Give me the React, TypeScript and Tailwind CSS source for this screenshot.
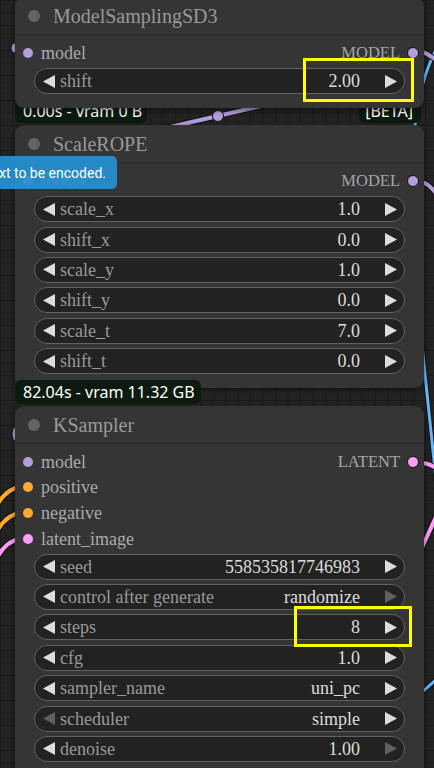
import React from "react";

type Slot = { label: string; color: string };

function Tri({ dir, dim }: { dir: "l" | "r"; dim?: boolean }) {
  return (
    <svg width="12" height="13" viewBox="0 0 12 13" className="shrink-0">
      <polygon
        points={dir === "l" ? "12,0 12,13 0,6.5" : "0,0 0,13 12,6.5"}
        fill={dim ? "#5f5f5f" : "#dddddd"}
      />
    </svg>
  );
}

function Widget({
  label,
  value,
  leftDim,
  rightDim,
}: {
  label: string;
  value: string;
  leftDim?: boolean;
  rightDim?: boolean;
}) {
  return (
    <div className="h-[30.4px] flex items-center px-[19px]">
      <div className="h-[26px] w-full rounded-full bg-[#222222] border border-[#616161] flex items-center">
        <div className="ml-[8px] flex">
          <Tri dir="l" dim={leftDim} />
        </div>
        <span className="ml-[5px] text-[#999999] leading-none whitespace-nowrap">{label}</span>
        <span className="ml-auto text-[#dddddd] leading-none whitespace-nowrap">{value}</span>
        <div className="ml-[25px] mr-[7px] flex">
          <Tri dir="r" dim={rightDim} />
        </div>
      </div>
    </div>
  );
}

function Row({ left, right, h }: { left?: Slot; right?: Slot; h: string }) {
  return (
    <div className={`${h} flex items-center`}>
      {left && (
        <>
          <div className="ml-[8px] w-[10px] h-[10px] rounded-full shrink-0" style={{ background: left.color }} />
          <span className="ml-[8px] text-[#aaaaaa] leading-none">{left.label}</span>
        </>
      )}
      {right && (
        <>
          <span className="ml-auto text-[#a5a5a5] text-[16.5px] leading-none">{right.label}</span>
          <div
            className="ml-[7px] mr-[5px] w-[12px] h-[12px] rounded-full shrink-0 border border-[#111111]"
            style={{ background: right.color }}
          />
        </>
      )}
    </div>
  );
}

function Title({ text }: { text: string }) {
  return (
    <div className="h-[38px] flex items-center border-b border-[#2a2a2a]">
      <div className="ml-[13px] w-[12px] h-[12px] rounded-full bg-[#636363]" />
      <span className="ml-[13px] text-[20px] text-[#999999] leading-none">{text}</span>
    </div>
  );
}

const MODEL = "#b39ddb";
const COND = "#ffa931";
const LAT = "#ff9cf9";

export default function App() {
  return (
    <div
      className="relative w-[434px] h-[768px] overflow-hidden bg-[#232323] bg-[linear-gradient(#1a1a1a_1px,transparent_1px),linear-gradient(90deg,#1a1a1a_1px,transparent_1px)] bg-[size:12.5px_12.5px] text-[18px]"
      style={{ fontFamily: '"Liberation Serif", "Times New Roman", serif' }}
    >
      {/* links */}
      <svg className="absolute inset-0 z-0" width="434" height="768" viewBox="0 0 434 768">
        <g fill="none" strokeLinecap="round">
          <path d="M140 134 L300 97" stroke="#111" strokeWidth="6" />
          <path d="M140 134 L300 97" stroke={MODEL} strokeWidth="4" />
          <path d="M445 35 Q420 70 414 135" stroke="#111" strokeWidth="5" />
          <path d="M445 35 Q420 70 414 135" stroke="#64b5f6" strokeWidth="3" />
          <path d="M422 345 L436 480" stroke="#111" strokeWidth="5" />
          <path d="M422 345 L436 480" stroke="#64b5f6" strokeWidth="3" />
          <path d="M413 51 C428 51 428 56 440 62" stroke="#111" strokeWidth="6" />
          <path d="M413 51 C428 51 428 56 440 62" stroke={MODEL} strokeWidth="4" />
          <path d="M413 181 C430 181 432 190 440 198" stroke="#111" strokeWidth="6" />
          <path d="M413 181 C430 181 432 190 440 198" stroke={MODEL} strokeWidth="4" />
          <path d="M413 462 C428 462 432 466 440 470" stroke="#111" strokeWidth="6" />
          <path d="M413 462 C428 462 432 466 440 470" stroke={LAT} strokeWidth="4" />
          <path d="M420 552 L440 508" stroke="#111" strokeWidth="6" />
          <path d="M420 552 L440 508" stroke={LAT} strokeWidth="4" />
          <path d="M420 694 L440 676" stroke="#111" strokeWidth="5" />
          <path d="M420 694 L440 676" stroke="#64b5f6" strokeWidth="3" />
          <path d="M-6 512 Q2 490 22 486" stroke="#111" strokeWidth="6" />
          <path d="M-6 512 Q2 490 22 486" stroke={COND} strokeWidth="4" />
          <path d="M-6 538 Q2 516 22 512" stroke="#111" strokeWidth="6" />
          <path d="M-6 538 Q2 516 22 512" stroke={COND} strokeWidth="4" />
          <path d="M-6 565 Q2 542 22 538" stroke="#111" strokeWidth="6" />
          <path d="M-6 565 Q2 542 22 538" stroke={LAT} strokeWidth="4" />
        </g>
        <circle cx="218" cy="116" r="5.5" fill={MODEL} stroke="#111" strokeWidth="1" />
        <ellipse cx="15" cy="48" rx="4" ry="5" fill={MODEL} stroke="#111" strokeWidth="1" />
        <ellipse cx="17" cy="434" rx="5" ry="8" fill={MODEL} stroke="#111" strokeWidth="1" />
      </svg>

      {/* badges of node 1 (under node 1) */}
      <div className="absolute z-10 left-[15px] top-[99px] w-[132px] h-[24px] rounded-[6px] bg-[#0d1a0f] flex items-center pl-[8px]">
        <span className="text-white text-[16px] leading-none" style={{ fontFamily: '"Noto Sans", sans-serif' }}>
          0.00s - vram 0 B
        </span>
      </div>
      <div className="absolute z-10 left-[359px] top-[99px] w-[62px] h-[24px] rounded-[6px] bg-[#0d1a0f] flex items-center justify-end pr-[8px]">
        <span className="text-white text-[16px] leading-none" style={{ fontFamily: '"Noto Sans", sans-serif' }}>
          [BETA]
        </span>
      </div>

      {/* Node 1 */}
      <div className="absolute z-20 left-[15px] top-[-3px] w-[409px] rounded-[9px] bg-[#353535] shadow-[0_2px_6px_rgba(0,0,0,0.5)]">
        <Title text="ModelSamplingSD3" />
        <div className="pt-[5px] pb-[12px]">
          <Row h="h-[26px]" left={{ label: "model", color: MODEL }} right={{ label: "MODEL", color: MODEL }} />
          <Widget label="shift" value="2.00" />
        </div>
      </div>

      {/* Node 2 */}
      <div className="absolute z-20 left-[15px] top-[125px] w-[409px] rounded-[9px] bg-[#353535] shadow-[0_2px_6px_rgba(0,0,0,0.5)]">
        <Title text="ScaleROPE" />
        <div className="pt-[5px] pb-[12px]">
          <Row h="h-[26px]" left={{ label: "model", color: MODEL }} right={{ label: "MODEL", color: MODEL }} />
          <Widget label="scale_x" value="1.0" />
          <Widget label="shift_x" value="0.0" />
          <Widget label="scale_y" value="1.0" />
          <Widget label="shift_y" value="0.0" />
          <Widget label="scale_t" value="7.0" />
          <Widget label="shift_t" value="0.0" />
        </div>
      </div>

      {/* badge node 2 (over node) */}
      <div className="absolute z-30 left-[15px] top-[380px] w-[186px] h-[24px] rounded-[6px] bg-[#0d1a0f] flex items-center pl-[8px]">
        <span className="text-white text-[16px] leading-none" style={{ fontFamily: '"Noto Sans", sans-serif' }}>
          82.04s - vram 11.32 GB
        </span>
      </div>

      {/* Node 3 */}
      <div className="absolute z-20 left-[15px] top-[406px] w-[409px] rounded-[9px] bg-[#353535] shadow-[0_2px_6px_rgba(0,0,0,0.5)]">
        <Title text="KSampler" />
        <div className="pt-[5px] pb-[12px]">
          <Row h="h-[25.6px]" left={{ label: "model", color: MODEL }} right={{ label: "LATENT", color: LAT }} />
          <Row h="h-[25.6px]" left={{ label: "positive", color: COND }} />
          <Row h="h-[25.6px]" left={{ label: "negative", color: COND }} />
          <Row h="h-[25.6px]" left={{ label: "latent_image", color: LAT }} />
          <Widget label="seed" value="558535817746983" />
          <Widget label="control after generate" value="randomize" rightDim />
          <Widget label="steps" value="8" />
          <Widget label="cfg" value="1.0" />
          <Widget label="sampler_name" value="uni_pc" />
          <Widget label="scheduler" value="simple" leftDim />
          <Widget label="denoise" value="1.00" rightDim />
        </div>
      </div>

      {/* tooltip */}
      <div className="absolute z-40 left-[-40px] top-[156px] w-[157px] h-[33px] rounded-[5px] bg-[rgba(38,145,210,0.93)] flex items-center justify-end pr-[11px] overflow-hidden">
        <span className="text-white text-[14px] leading-none whitespace-nowrap" style={{ fontFamily: 'Roboto, "Noto Sans", sans-serif' }}>
          Text to be encoded.
        </span>
      </div>

      {/* highlight boxes */}
      <div className="absolute z-50 left-[303px] top-[58px] w-[111px] h-[44px] border-[3px] border-[#ffff00]" />
      <div className="absolute z-50 left-[294px] top-[606px] w-[118px] h-[41px] border-[3px] border-[#ffff00]" />
    </div>
  );
}
